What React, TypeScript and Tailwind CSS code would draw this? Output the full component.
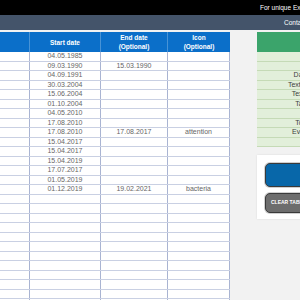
import React from "react";

type Row = { start: string; end?: string; icon?: string };

const rows: Row[] = [
  { start: "04.05.1985" },
  { start: "09.03.1990", end: "15.03.1990" },
  { start: "04.09.1991" },
  { start: "30.03.2004" },
  { start: "15.06.2004" },
  { start: "01.10.2004" },
  { start: "04.05.2010" },
  { start: "17.08.2010" },
  { start: "17.08.2010", end: "17.08.2017", icon: "attention" },
  { start: "15.04.2017" },
  { start: "15.04.2017" },
  { start: "15.04.2019" },
  { start: "17.07.2017" },
  { start: "01.05.2019" },
  { start: "01.12.2019", end: "19.02.2021", icon: "bacteria" },
];

// empty rows fill the sheet down to the bottom edge
const allRows: Row[] = [...rows, ...Array.from({ length: 12 }, () => ({ start: "" }))];

const settings = ["", "", "Date", "Text box", "Text 2", "Tag", "", "Top", "Event", ""];

const App = () => {
  return (
    <div className="w-[300px] h-[300px] overflow-hidden bg-[#f2f2f2] font-['Liberation_Sans',Arial,sans-serif]">
      {/* TOP BARS */}
      <div className="h-[15px] bg-black text-white text-[6.5px] leading-[15px] pl-[260px] whitespace-nowrap overflow-hidden">
        For unique Excel templates visit our website
      </div>
      <div className="h-[15px] bg-[#44546a] text-white text-[6.5px] leading-[15px] pl-[284px] whitespace-nowrap overflow-hidden">
        Contact us
      </div>

      <div className="flex mt-[2px]">
        {/* TABLE */}
        <div className="w-[230px] shrink-0 bg-white">
          <div className="flex h-[20px] bg-[#0b6fc9] text-white font-bold text-[6.5px] leading-[9px] text-center">
            <div className="w-[30px] border-r border-white/25" />
            <div className="w-[71px] border-r border-white/25 flex items-center justify-center">Start date</div>
            <div className="w-[67px] border-r border-white/25 flex items-center justify-center">
              End date
              <br />
              (Optional)
            </div>
            <div className="w-[62px] flex items-center justify-center">
              Icon
              <br />
              (Optional)
            </div>
          </div>
          {allRows.map((r, i) => (
            <div key={i} className="flex h-[9.5px] border-b border-[#c9d0e3] text-[7px] leading-[8.5px] text-[#666666] text-center">
              <div className="w-[30px] border-r border-[#a9b4d2]" />
              <div className="w-[71px] border-r border-[#a9b4d2]">{r.start}</div>
              <div className="w-[67px] border-r border-[#a9b4d2]">{r.end}</div>
              <div className="w-[62px] border-r border-[#a9b4d2]">{r.icon}</div>
            </div>
          ))}
        </div>

        {/* RIGHT PANEL */}
        <div className="flex-1 overflow-hidden pl-[27px]">
          <div className="w-[88px]">
            <div className="h-[20px] bg-[#3ba46b]" />
            {settings.map((s, i) => (
              <div key={i} className="h-[9.5px] bg-[#e2efda] border-b border-[#c5dab6] text-[7px] leading-[8.5px] text-[#404040] text-center whitespace-nowrap">
                {s}
              </div>
            ))}
          </div>

          <div className="mt-[8px] w-[88px] bg-white pt-[8px] pl-[8px] pb-[6px] shadow-[0_0_2px_rgba(0,0,0,0.1)]">
            <div className="h-[24px] w-[100px] rounded-[5px] bg-[#0867a9] border-[1.5px] border-[#3a3a3a] ring-1 ring-[#d0d0d0]" />
            <div className="mt-[6px] h-[20px] w-[100px] rounded-[5px] bg-[#6d6d6d] border-[1.5px] border-[#3a3a3a] ring-1 ring-[#d0d0d0] text-white font-bold text-[5px] leading-[17px] pl-[5px] whitespace-nowrap">
              CLEAR TABLE
            </div>
          </div>
        </div>
      </div>
    </div>
  );
};

export default App;
